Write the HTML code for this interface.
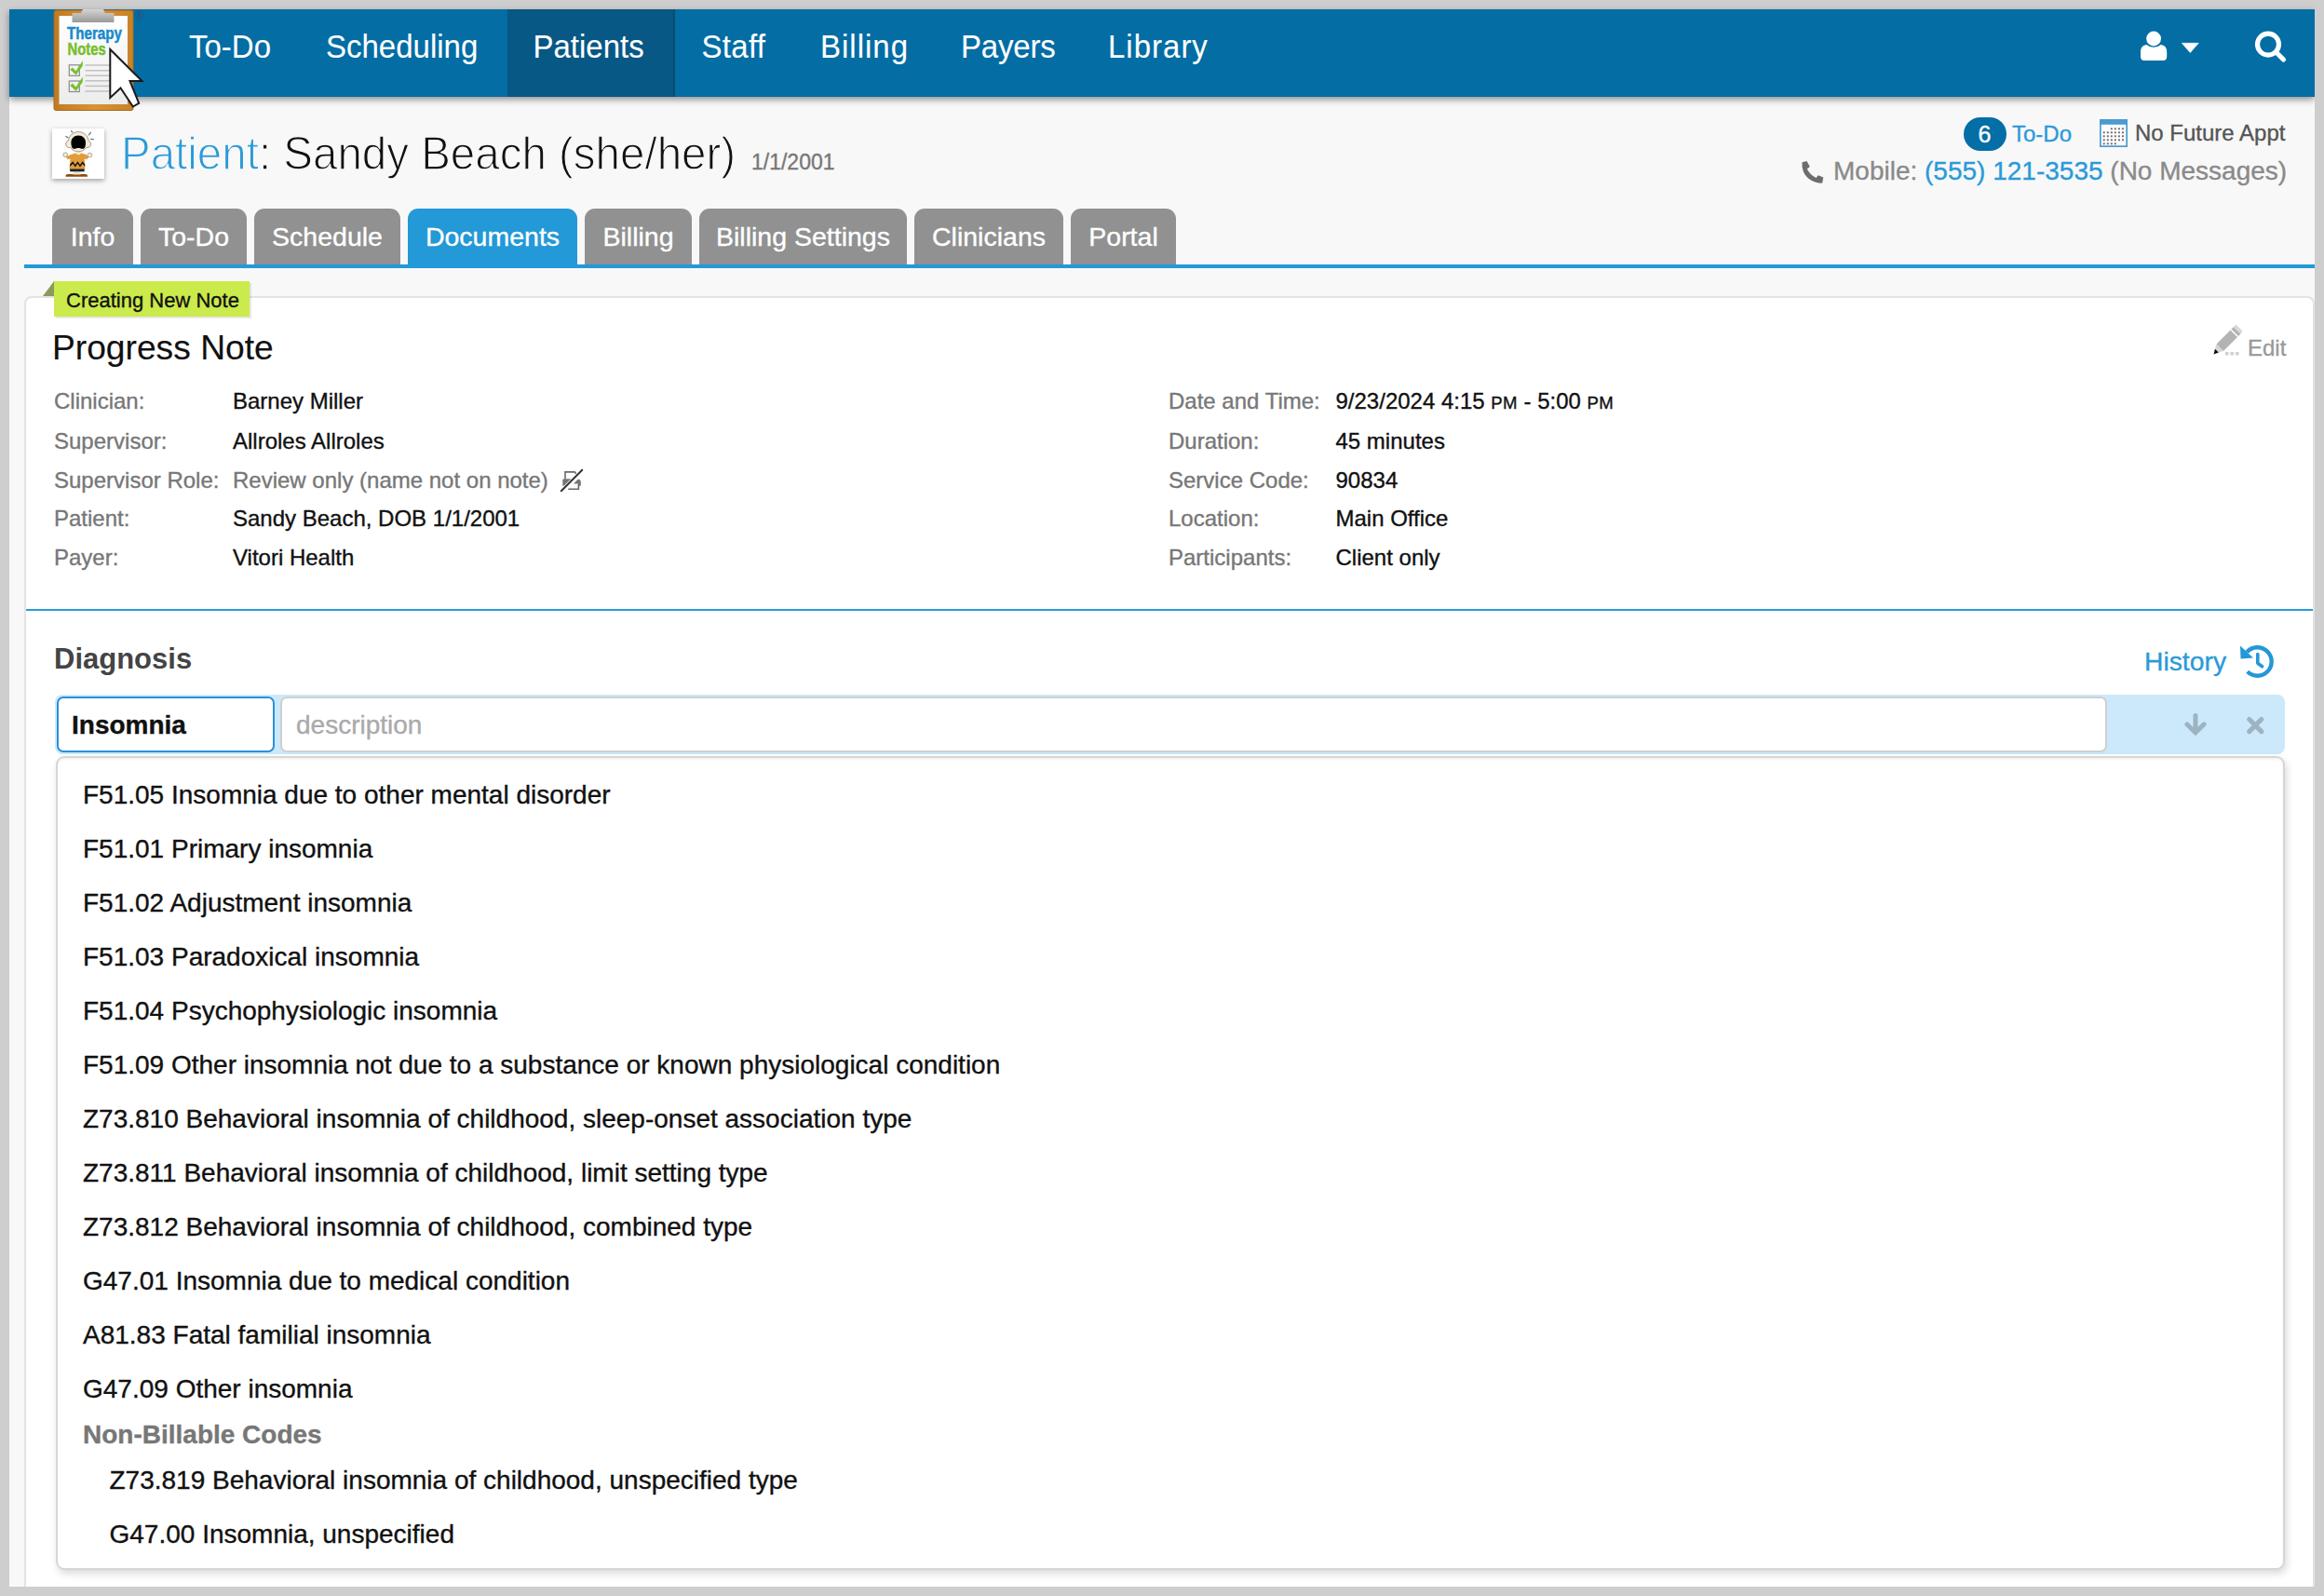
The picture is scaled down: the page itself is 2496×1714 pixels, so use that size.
<!DOCTYPE html>
<html><head><meta charset="utf-8">
<style>
*{box-sizing:border-box;margin:0;padding:0}
html,body{width:2496px;height:1714px;overflow:hidden;background:#cecece;font-family:"Liberation Sans",sans-serif;position:relative}
.a,.tab span{-webkit-text-stroke:0.35px currentColor}
.a{position:absolute;white-space:nowrap;line-height:1}
.navt{color:#fff;font-size:33px;top:34px;-webkit-text-stroke:0.1px #fff;transform:scaleY(1.06);transform-origin:0 28px}
.tab{position:absolute;top:224px;height:60px;background:#919191;border-radius:11px 11px 0 0}
.tab span{position:absolute;left:0;right:0;text-align:center;color:#fff;font-size:28.5px;top:16px;line-height:1;white-space:nowrap}
.lbl{color:#777;font-size:24px}
.val{color:#111;font-size:24px}
.li{color:#111;font-size:28px}
</style></head><body>
<!-- page bg -->
<div style="position:absolute;left:10px;top:10px;width:2476px;height:1694px;background:#f8f8f8"></div>

<!-- PANEL -->
<div style="position:absolute;left:26px;top:318px;width:2460px;height:1400px;background:#fff;border:2px solid #e3e3e3;border-radius:8px 8px 0 0"></div>

<!-- NAV -->
<div style="position:absolute;left:10px;top:10px;width:2476px;height:94px;background:#036da4;box-shadow:0 3px 7px rgba(0,0,0,.42)"></div>
<div style="position:absolute;left:545px;top:10px;width:180px;height:94px;background:#085885;box-shadow:inset -2px 0 1px rgba(0,0,0,.12)"></div>
<div class="a navt" style="left:203px">To-Do</div>
<div class="a navt" style="left:350px">Scheduling</div>
<div class="a navt" style="left:572.5px">Patients</div>
<div class="a navt" style="left:753.5px;letter-spacing:0.3px">Staff</div>
<div class="a navt" style="left:881px;letter-spacing:1px">Billing</div>
<div class="a navt" style="left:1032px;letter-spacing:-0.2px">Payers</div>
<div class="a navt" style="left:1190px;letter-spacing:1px">Library</div>

<!-- nav right icons -->
<svg class="a" style="left:2290px;top:25px" width="180" height="50" viewBox="2290 25 180 50">
  <path d="M2305.5 48 Q2299 48.5 2299 56 L2299 60.8 Q2299 65 2303 65 L2323.2 65 Q2327.2 65 2327.2 60.8 L2327.2 56 Q2327.2 48.5 2320.7 48 Q2317.5 50.8 2313.1 50.8 Q2308.7 50.8 2305.5 48Z" fill="#fff"/>
  <circle cx="2313.1" cy="41.5" r="7.9" fill="#fff"/>
  <path d="M2343.3 46.3 L2361.3 46.3 L2352.3 56.6Z" fill="#fff" stroke="#fff" stroke-width="0.6" stroke-linejoin="round"/>
  <circle cx="2436" cy="47.6" r="11.5" fill="none" stroke="#fff" stroke-width="5.2"/>
  <path d="M2444.5 56 L2452.5 64" stroke="#fff" stroke-width="5.2" stroke-linecap="round"/>
</svg>


<!-- LOGO -->
<svg class="a" style="left:50px;top:5px;overflow:visible" width="110" height="120" viewBox="50 5 110 120">
  <defs>
    <linearGradient id="wood" x1="0" y1="0" x2="1" y2="0">
      <stop offset="0" stop-color="#c07a22"/><stop offset="0.5" stop-color="#d99235"/><stop offset="1" stop-color="#c98327"/>
    </linearGradient>
    <linearGradient id="clip" x1="0" y1="0" x2="0" y2="1">
      <stop offset="0" stop-color="#d4d4d4"/><stop offset="1" stop-color="#9a9a9a"/>
    </linearGradient>
    <linearGradient id="paper" x1="0" y1="0" x2="0" y2="1">
      <stop offset="0" stop-color="#ffffff"/><stop offset="1" stop-color="#ececec"/>
    </linearGradient>
  </defs>
  <rect x="58" y="11" width="85" height="107.5" rx="2" fill="url(#wood)" stroke="#a86a1c" stroke-width="1"/>
  <rect x="63.5" y="17" width="73.5" height="95" fill="url(#paper)"/>
  <path d="M89 10 L111 10 L113 14 L122.5 14 L122.5 23.5 Q122.5 24 121 24 L79 24 Q77.5 24 77.5 23.5 L77.5 14 L87 14Z" fill="url(#clip)"/>
  <text x="72" y="42.3" font-family="Liberation Sans" font-weight="bold" font-size="18.6" fill="#1a8acb" stroke="#1a8acb" stroke-width="0.5" textLength="59" lengthAdjust="spacingAndGlyphs">Therapy</text>
  <text x="72.6" y="59.3" font-family="Liberation Sans" font-weight="bold" font-size="18.6" fill="#76bf2e" stroke="#76bf2e" stroke-width="0.5" textLength="41" lengthAdjust="spacingAndGlyphs">Notes</text>
  <rect x="74.3" y="69.8" width="11" height="11.5" fill="none" stroke="#8a8a8a" stroke-width="1.2"/>
  <rect x="74.3" y="87" width="11" height="11.5" fill="none" stroke="#8a8a8a" stroke-width="1.2"/>
  <path d="M75.3 74.8 L77.8 72.4 L81.5 76.2 L88.8 65.3 L88.8 70.8 L81.7 80.6Z" fill="#76bf2e"/>
  <path d="M75.3 92 L77.8 89.6 L81.5 93.4 L88.8 82.5 L88.8 88 L81.7 97.8Z" fill="#76bf2e"/>
  <g stroke="#bdbdbd" stroke-width="1.4">
    <line x1="91.5" y1="70" x2="118" y2="70"/><line x1="91.5" y1="75.8" x2="118" y2="75.8"/><line x1="91.5" y1="81.2" x2="118" y2="81.2"/>
    <line x1="91.5" y1="86.8" x2="118" y2="86.8"/><line x1="91.5" y1="92.4" x2="118" y2="92.4"/><line x1="91.5" y1="98" x2="118" y2="98"/>
  </g>
  <circle cx="149.3" cy="16.1" r="4.3" fill="none" stroke="#23557f" stroke-width="0.9"/><text x="147.2" y="18.6" font-family="Liberation Sans" font-size="6.5" font-weight="bold" fill="#23557f">R</text>
  <path d="M118.3 53 L118.3 105 L129.5 94.5 L142.8 114.5 L149.2 110.8 L139.5 87 L152.5 87 Z" fill="#fff" stroke="#1a1a1a" stroke-width="2" stroke-linejoin="miter"/>
</svg>

<!-- AVATAR -->
<div style="position:absolute;left:56px;top:138px;width:56px;height:54px;background:#fff;box-shadow:0 2px 5px rgba(0,0,0,.35)"></div>
<svg class="a" style="left:56px;top:138px" width="56" height="54" viewBox="56 138 56 54">
  <rect x="56" y="138" width="56" height="54" fill="#fff"/>
  <path d="M70.5 189.8 Q70 187.3 73 187 L91.5 187 Q94.5 187.3 94 189.8Z" fill="#8d4d12"/>
  <rect x="78.5" y="183.5" width="8" height="4" fill="#efe4c8"/>
  <path d="M75 180.3 L90.8 180.3 L90.6 184.3 L75.2 184.3Z" fill="#1b2236"/>
  <path d="M76 166 L82 164.3 L84.2 166.5 L86.5 164.3 L92.5 166 L95.3 168.8 L93.3 171.2 L90.8 170.6 L91.3 181.5 L74.5 181.5 L75.5 170.6 L72.8 171.2 L70.8 168.6Z" fill="#e39c3a"/>
  <path d="M75.2 176.6 L78.2 173.2 L80.8 177 L83.4 173.2 L86 177 L88.6 173.2 L91.2 176.6 L91.2 179 L88.6 175.8 L86 179.5 L83.4 175.8 L80.8 179.5 L78.2 175.8 L75.2 179Z" fill="#111"/>
  <circle cx="70.2" cy="166.2" r="2.4" fill="#f2e9d2" stroke="#666" stroke-width="0.5"/>
  <circle cx="96.4" cy="166.6" r="2.4" fill="#f2e9d2" stroke="#666" stroke-width="0.5"/>
  <rect x="82.2" y="161.5" width="4.2" height="4.5" fill="#f2e9d2"/>
  <path d="M84.2 141.6 C90.5 141.6 94.5 146 95 151 C97.5 152 98.5 155.5 96.5 157.5 C95 158.5 93.5 158.5 92.5 158.5 C90.5 161.5 87.5 162.8 84.2 162.8 C80.5 162.8 77.5 161.5 75.8 158.5 C74.5 158.8 72 158.5 71 156.5 C70 154 71.5 151.5 73.5 151 C74 146 78 141.6 84.2 141.6Z" fill="#f4ebd5" stroke="#6b6250" stroke-width="0.6"/>
  <path d="M84.2 145.6 C89 145.6 92 149 92 153 C92 157 91 159.8 89 159.8 C87.5 159.8 86 159 84.2 159 C82.4 159 81 159.8 79.4 159.8 C77.4 159.8 76.4 157 76.4 153 C76.4 149 79.4 145.6 84.2 145.6Z" fill="#000"/>
  <path d="M70.8 146.6 L73 147.8 M76.6 140.6 L77.6 141.8 M95.3 145 L97.5 142.3 M97.5 149.2 L100.5 149.8" stroke="#5a6070" stroke-width="1.1" stroke-linecap="round"/>
</svg>

<!-- PATIENT HEADER -->
<div class="a" style="left:130px;top:142px;font-size:47.5px;color:#111;-webkit-text-stroke:1.2px #f8f8f8;transform:scaleY(1.07);transform-origin:0 40.4px"><span style="color:#2a9ad8">Patient</span>: Sandy Beach (she/her)</div>
<div class="a" style="left:807px;top:163px;font-size:23px;color:#777">1/1/2001</div>

<!-- right header -->
<div style="position:absolute;left:2109px;top:126px;width:46px;height:36px;border-radius:18px;background:#046ea6"></div>
<div class="a" style="left:2124.5px;top:132px;font-size:25px;color:#fff">6</div>
<div class="a" style="left:2161px;top:131.8px;font-size:24px;color:#2a9ad8">To-Do</div>
<svg class="a" style="left:2250px;top:124px" width="40" height="40" viewBox="2250 124 40 40">
  <rect x="2255" y="128" width="30" height="30" fill="#4a9bd0"/>
  <rect x="2256.7" y="133.8" width="26.6" height="22.5" fill="#fff"/>
  <rect x="2266.8" y="137.3" width="2" height="2" fill="#6f6f6f"/><rect x="2270.8" y="137.3" width="2" height="2" fill="#6f6f6f"/><rect x="2274.9" y="137.3" width="2" height="2" fill="#6f6f6f"/><rect x="2278.9" y="137.3" width="2" height="2" fill="#6f6f6f"/><rect x="2258.7" y="141.3" width="2" height="2" fill="#6f6f6f"/><rect x="2262.8" y="141.3" width="2" height="2" fill="#6f6f6f"/><rect x="2266.8" y="141.3" width="2" height="2" fill="#6f6f6f"/><rect x="2270.8" y="141.3" width="2" height="2" fill="#6f6f6f"/><rect x="2274.9" y="141.3" width="2" height="2" fill="#6f6f6f"/><rect x="2278.9" y="141.3" width="2" height="2" fill="#6f6f6f"/><rect x="2258.7" y="145.3" width="2" height="2" fill="#6f6f6f"/><rect x="2262.8" y="145.3" width="2" height="2" fill="#6f6f6f"/><rect x="2266.8" y="145.3" width="2" height="2" fill="#6f6f6f"/><rect x="2270.8" y="145.3" width="2" height="2" fill="#6f6f6f"/><rect x="2274.9" y="145.3" width="2" height="2" fill="#6f6f6f"/><rect x="2278.9" y="145.3" width="2" height="2" fill="#6f6f6f"/><rect x="2258.7" y="149.3" width="2" height="2" fill="#6f6f6f"/><rect x="2262.8" y="149.3" width="2" height="2" fill="#6f6f6f"/><rect x="2266.8" y="149.3" width="2" height="2" fill="#6f6f6f"/><rect x="2270.8" y="149.3" width="2" height="2" fill="#6f6f6f"/><rect x="2274.9" y="149.3" width="2" height="2" fill="#6f6f6f"/><rect x="2278.9" y="149.3" width="2" height="2" fill="#6f6f6f"/><rect x="2258.7" y="153.3" width="2" height="2" fill="#6f6f6f"/><rect x="2262.8" y="153.3" width="2" height="2" fill="#6f6f6f"/><rect x="2266.8" y="153.3" width="2" height="2" fill="#6f6f6f"/><rect x="2270.8" y="153.3" width="2" height="2" fill="#6f6f6f"/>
</svg>
<div class="a" style="left:2293px;top:131px;font-size:24px;color:#555">No Future Appt</div>
<svg class="a" style="left:1930px;top:170px" width="32" height="30" viewBox="1930 170 32 30">
  <path d="M1935.5 174.2 L1940.5 173 L1943.8 179 L1940.8 181.6 Q1944 188 1950.5 191 L1952.8 188.2 L1958.3 190.5 L1957.2 196.5 Q1950 197.5 1942 191.5 Q1934.5 184.5 1935.5 174.2Z" fill="#6d6d6d"/>
</svg>
<div class="a" style="left:1969px;top:170.3px;font-size:28px;color:#8a8a8a">Mobile: <span style="color:#2a9ad8">(555) 121-3535</span> (No Messages)</div>

<!-- TABS -->
<div class="tab" style="left:56px;width:87px"><span>Info</span></div>
<div class="tab" style="left:151px;width:114px"><span>To-Do</span></div>
<div class="tab" style="left:273px;width:157px"><span>Schedule</span></div>
<div class="tab" style="left:438px;width:182px;background:#2399d8"><span>Documents</span></div>
<div class="tab" style="left:628px;width:115px"><span>Billing</span></div>
<div class="tab" style="left:751px;width:223px"><span>Billing Settings</span></div>
<div class="tab" style="left:982px;width:160px"><span>Clinicians</span></div>
<div class="tab" style="left:1150px;width:113px"><span>Portal</span></div>
<div style="position:absolute;left:26px;top:284px;width:2460px;height:4px;background:#2399d8"></div>

<!-- creating new note label -->
<div style="position:absolute;left:46px;top:302px;width:0;height:0;border-left:12px solid transparent;border-bottom:16px solid #8a9a5a"></div>
<div style="position:absolute;left:58px;top:302px;width:210px;height:38px;background:#cbea4b;box-shadow:2px 2px 0 rgba(0,0,0,.09)"></div>
<div class="a" style="left:71px;top:312.3px;font-size:22px;color:#111">Creating New Note</div>

<div class="a" style="left:56px;top:354.5px;font-size:37.2px;color:#111;-webkit-text-stroke:0.15px #111">Progress Note</div>
<svg class="a" style="left:2370px;top:345px" width="45" height="42" viewBox="2370 345 45 42">
  <path d="M2377.5 380.5 L2379 374.5 L2383 378.5Z" fill="#111"/>
  <path d="M2379 374.5 L2380.5 369.5 L2388 377 L2383 378.5Z" fill="#d6d6d6"/>
  <path d="M2380.5 369.5 L2399 351 L2406.5 358.5 L2388 377Z" fill="#b3b3b3"/>
  <path d="M2396 354 L2403.5 361.5" stroke="#fff" stroke-width="1.5"/>
  <path d="M2399 351 L2401.5 348.5 L2408.8 355.8 L2406.5 358.5Z" fill="#d8d8d8"/>
  <rect x="2390" y="378" width="3.5" height="3.5" fill="#cfcfcf"/><rect x="2395.5" y="378" width="3.5" height="3.5" fill="#cfcfcf"/><rect x="2401" y="378" width="3.5" height="3.5" fill="#cfcfcf"/>
</svg>
<div class="a" style="left:2414px;top:361.6px;font-size:24px;color:#999">Edit</div>

<!-- fields -->
<div class="a lbl" style="left:58px;top:419.3px">Clinician:</div>
<div class="a val" style="left:250px;top:419.3px">Barney Miller</div>
<div class="a lbl" style="left:58px;top:461.5px">Supervisor:</div>
<div class="a val" style="left:250px;top:461.5px">Allroles Allroles</div>
<div class="a lbl" style="left:58px;top:503.6px">Supervisor Role:</div>
<div class="a lbl" style="left:250px;top:503.6px">Review only (name not on note)</div>
<svg class="a" style="left:595px;top:500px" width="36" height="32" viewBox="595 500 36 32">
  <path d="M607 514.5 L607 506.9 L617.2 506.9 L619.5 509.5" fill="none" stroke="#6a6a6a" stroke-width="1.6"/>
  <path d="M604.3 515.5 Q604.3 514.2 606 514.2 L616.5 514.2 L606.5 521.8 L604.3 521.8Z" fill="#757575"/>
  <path d="M621 514.5 Q623.8 515 623.8 517.5 L623.8 521.8 L621.5 521.8 L621.5 519.5 L616 519.5Z" fill="#757575"/>
  <path d="M610.3 525.2 L621.4 525.2 L621.4 519.5" fill="none" stroke="#6a6a6a" stroke-width="1.6"/>
  <path d="M603 527 L625 505" stroke="#fff" stroke-width="3.6"/>
  <path d="M602.8 527.2 L625.2 504.8" stroke="#333" stroke-width="2" stroke-linecap="round"/>
</svg>
<div class="a lbl" style="left:58px;top:545.2px">Patient:</div>
<div class="a val" style="left:250px;top:545.2px">Sandy Beach, DOB 1/1/2001</div>
<div class="a lbl" style="left:58px;top:587.4px">Payer:</div>
<div class="a val" style="left:250px;top:587.4px">Vitori Health</div>

<div class="a lbl" style="left:1255px;top:419.3px">Date and Time:</div>
<div class="a val" style="left:1434.5px;top:419.3px">9/23/2024 4:15 <span style="font-size:18.6px;letter-spacing:0.3px">PM</span> - 5:00 <span style="font-size:18.6px;letter-spacing:0.3px">PM</span></div>
<div class="a lbl" style="left:1255px;top:461.5px">Duration:</div>
<div class="a val" style="left:1434.5px;top:461.5px">45 minutes</div>
<div class="a lbl" style="left:1255px;top:503.6px">Service Code:</div>
<div class="a val" style="left:1434.5px;top:503.6px">90834</div>
<div class="a lbl" style="left:1255px;top:545.2px">Location:</div>
<div class="a val" style="left:1434.5px;top:545.2px">Main Office</div>
<div class="a lbl" style="left:1255px;top:587.4px">Participants:</div>
<div class="a val" style="left:1434.5px;top:587.4px">Client only</div>

<div style="position:absolute;left:28px;top:654px;width:2456px;height:2px;background:#2a9ad8"></div>

<!-- DIAGNOSIS -->
<div class="a" style="left:58px;top:691.5px;font-size:31px;color:#444;font-weight:bold;-webkit-text-stroke:0">Diagnosis</div>
<div class="a" style="left:2303px;top:696px;font-size:28.3px;color:#2a9ad8">History</div>

<svg class="a" style="left:2400px;top:688px" width="48" height="45" viewBox="2400 688 48 45">
  <path d="M2413.75 721.25 A15.2 15.2 0 1 0 2413.2 700.3" fill="none" stroke="#2398d8" stroke-width="4.4"/>
  <path d="M2406 693.5 L2406.5 707.5 L2420 706.5Z" fill="#2398d8"/>
  <path d="M2424.8 702.5 L2424.8 712.3 L2429.6 715.8" fill="none" stroke="#2398d8" stroke-width="3.6" stroke-linecap="round" stroke-linejoin="round"/>
</svg>
<div style="position:absolute;left:59px;top:746px;width:2395px;height:64px;background:#cce9fb;border-radius:8px"></div>
<div style="position:absolute;left:61px;top:748px;width:234px;height:60px;background:#fff;border:2px solid #2a90d8;border-radius:7px"></div>
<div class="a" style="left:77px;top:765px;font-size:28px;color:#111;font-weight:bold">Insomnia</div>
<div style="position:absolute;left:301px;top:748px;width:1962px;height:60px;background:#fff;border:2px solid #cfcfcf;border-radius:7px"></div>
<div class="a" style="left:318px;top:764.7px;font-size:28px;color:#aaa">description</div>

<svg class="a" style="left:2340px;top:760px" width="100" height="34" viewBox="2340 760 100 34">
  <path d="M2358 768.5 L2358 785" stroke="#9db3c2" stroke-width="5" stroke-linecap="round"/>
  <path d="M2348.8 777.8 L2358 786.8 L2367.2 777.8" fill="none" stroke="#9db3c2" stroke-width="5" stroke-linecap="round" stroke-linejoin="miter"/>
  <path d="M2415.7 772.5 L2428.8 785.6 M2428.8 772.5 L2415.7 785.6" stroke="#9db3c2" stroke-width="5.2" stroke-linecap="round"/>
</svg>
<!-- dropdown -->
<div style="position:absolute;left:60px;top:812px;width:2393.5px;height:873.5px;background:#fff;border:2px solid #d6d6d6;border-radius:9px;box-shadow:2px 4px 8px rgba(0,0,0,.15),inset 0 2px 3px rgba(0,0,0,.05)"></div>
<div class="a li" style="left:89px;top:840.3px">F51.05 Insomnia due to other mental disorder</div>
<div class="a li" style="left:89px;top:898.3px">F51.01 Primary insomnia</div>
<div class="a li" style="left:89px;top:956.3px">F51.02 Adjustment insomnia</div>
<div class="a li" style="left:89px;top:1014.3px">F51.03 Paradoxical insomnia</div>
<div class="a li" style="left:89px;top:1072.3px">F51.04 Psychophysiologic insomnia</div>
<div class="a li" style="left:89px;top:1130.3px">F51.09 Other insomnia not due to a substance or known physiological condition</div>
<div class="a li" style="left:89px;top:1188.3px">Z73.810 Behavioral insomnia of childhood, sleep-onset association type</div>
<div class="a li" style="left:89px;top:1246.3px">Z73.811 Behavioral insomnia of childhood, limit setting type</div>
<div class="a li" style="left:89px;top:1304.3px">Z73.812 Behavioral insomnia of childhood, combined type</div>
<div class="a li" style="left:89px;top:1362.3px">G47.01 Insomnia due to medical condition</div>
<div class="a li" style="left:89px;top:1420.3px">A81.83 Fatal familial insomnia</div>
<div class="a li" style="left:89px;top:1478.3px">G47.09 Other insomnia</div>
<div class="a" style="left:89px;top:1527.4px;font-size:28px;color:#777;font-weight:bold">Non-Billable Codes</div>
<div class="a li" style="left:117.5px;top:1575.9px">Z73.819 Behavioral insomnia of childhood, unspecified type</div>
<div class="a li" style="left:117.5px;top:1633.9px">G47.00 Insomnia, unspecified</div>

<!-- bottom frame -->
<div style="position:absolute;left:0;top:1704px;width:2496px;height:10px;background:#cecece"></div>
<div style="position:absolute;left:2486px;top:0;width:10px;height:1714px;background:#cecece"></div>
</body></html>
